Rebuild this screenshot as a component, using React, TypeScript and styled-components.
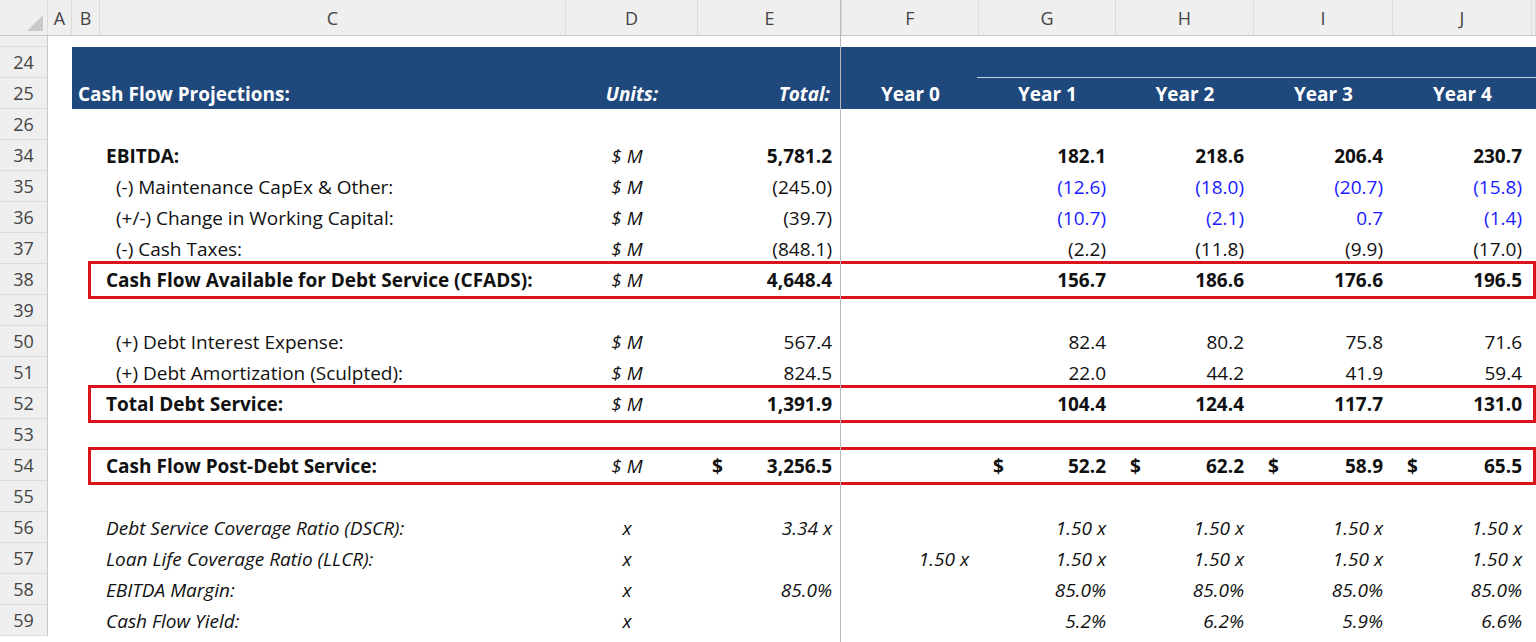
import React from 'react';
import styled, { createGlobalStyle } from 'styled-components';

const COLS = '48px 24px 28px 466px 132px 144px 137px 137px 138px 139px 139px 1fr';
const BLUE = '#1f487c';

const Global = createGlobalStyle`
  body { margin: 0; background: #fff; font-family: "Open Sans", "Liberation Sans", sans-serif; }
`;

const Sheet = styled.div`
  position: relative;
  width: 1536px;
  height: 642px;
  overflow: hidden;
  &::after {
    content: '';
    position: absolute;
    left: 840px;
    top: 0;
    bottom: 0;
    width: 1px;
    background: #b8b8b8;
  }
`;

const HeaderRow = styled.div`
  display: grid;
  grid-template-columns: ${COLS};
  height: 35px;
  background: #efefef;
  border-bottom: 1px solid #c8c8c8;
  color: #444;
  font-size: 18px;
  > div {
    display: flex;
    align-items: center;
    justify-content: center;
    border-right: 1px solid #dcdcdc;
  }
`;

const Corner = styled.div`
  position: relative;
  &::before {
    content: '';
    position: absolute;
    right: 4px;
    bottom: 4px;
    border-left: 16px solid transparent;
    border-bottom: 16px solid #c9c9c9;
  }
`;

const Row = styled.div<{ $h?: number; $band?: boolean; $bold?: boolean; $italic?: boolean }>`
  position: relative;
  display: grid;
  grid-template-columns: ${COLS};
  height: ${(p) => p.$h ?? 31}px;
  font-size: 19px;
  color: #111;
  font-weight: ${(p) => (p.$bold ? 700 : 400)};
  font-style: ${(p) => (p.$italic ? 'italic' : 'normal')};
  > div {
    display: flex;
    align-items: center;
    white-space: nowrap;
  }
`;

const Num = styled.div`
  justify-content: center;
  background: #efefef;
  color: #444;
  font-size: 18px;
  font-weight: 400;
  font-style: normal;
  border-bottom: 1px solid #dcdcdc;
  border-right: 1px solid #c8c8c8;
`;

const Band = styled.div<{ $line?: boolean }>`
  grid-column: 3 / -1;
  background: ${BLUE};
  position: relative;
  ${(p) =>
    p.$line &&
    `&::after{content:'';position:absolute;left:905px;right:0;bottom:0;height:1px;background:#c8d4e6;}`}
`;

const Head = styled.div<{ $align?: string }>`
  background: ${BLUE};
  color: #fff;
  font-weight: 700;
  justify-content: ${(p) => p.$align ?? 'center'};
  padding: 0 6px;
`;

const Label = styled.div<{ $indent?: number }>`
  grid-column: 4;
  padding-left: ${(p) => p.$indent ?? 6}px;
`;

const Unit = styled.div`
  justify-content: center;
  font-style: italic;
  font-weight: 400;
  padding-right: 10px;
`;

const Val = styled.div<{ $blue?: boolean; $bold?: boolean }>`
  justify-content: space-between;
  padding: 0 10px 0 14px;
  color: ${(p) => (p.$blue ? '#1a1aff' : 'inherit')};
  span:last-child { margin-left: auto; }
`;

const Box = styled.span`
  position: absolute;
  left: 88px;
  width: 1442px;
  top: -3px;
  bottom: -4px;
  border: 3px solid #d9141b;
  pointer-events: none;
`;

type Line = {
  n: string;
  label?: string;
  indent?: number;
  unit?: string;
  total?: string;
  f?: string;
  years?: string[];
  blue?: boolean;
  dollar?: boolean;
  bold?: boolean;
  italic?: boolean;
  box?: boolean;
};

const LINES: Line[] = [
  { n: '26' },
  { n: '34', label: 'EBITDA:', unit: '$ M', total: '5,781.2', years: ['182.1', '218.6', '206.4', '230.7'], bold: true },
  { n: '35', label: '(-) Maintenance CapEx & Other:', indent: 16, unit: '$ M', total: '(245.0)', years: ['(12.6)', '(18.0)', '(20.7)', '(15.8)'], blue: true },
  { n: '36', label: '(+/-) Change in Working Capital:', indent: 16, unit: '$ M', total: '(39.7)', years: ['(10.7)', '(2.1)', '0.7', '(1.4)'], blue: true },
  { n: '37', label: '(-) Cash Taxes:', indent: 16, unit: '$ M', total: '(848.1)', years: ['(2.2)', '(11.8)', '(9.9)', '(17.0)'] },
  { n: '38', label: 'Cash Flow Available for Debt Service (CFADS):', unit: '$ M', total: '4,648.4', years: ['156.7', '186.6', '176.6', '196.5'], bold: true, box: true },
  { n: '39' },
  { n: '50', label: '(+) Debt Interest Expense:', indent: 16, unit: '$ M', total: '567.4', years: ['82.4', '80.2', '75.8', '71.6'] },
  { n: '51', label: '(+) Debt Amortization (Sculpted):', indent: 16, unit: '$ M', total: '824.5', years: ['22.0', '44.2', '41.9', '59.4'] },
  { n: '52', label: 'Total Debt Service:', unit: '$ M', total: '1,391.9', years: ['104.4', '124.4', '117.7', '131.0'], bold: true, box: true },
  { n: '53' },
  { n: '54', label: 'Cash Flow Post-Debt Service:', unit: '$ M', total: '3,256.5', years: ['52.2', '62.2', '58.9', '65.5'], bold: true, box: true, dollar: true },
  { n: '55' },
  { n: '56', label: 'Debt Service Coverage Ratio (DSCR):', unit: 'x', total: '3.34 x', years: ['1.50 x', '1.50 x', '1.50 x', '1.50 x'], italic: true },
  { n: '57', label: 'Loan Life Coverage Ratio (LLCR):', unit: 'x', f: '1.50 x', years: ['1.50 x', '1.50 x', '1.50 x', '1.50 x'], italic: true },
  { n: '58', label: 'EBITDA Margin:', unit: 'x', total: '85.0%', years: ['85.0%', '85.0%', '85.0%', '85.0%'], italic: true },
  { n: '59', label: 'Cash Flow Yield:', unit: 'x', years: ['5.2%', '6.2%', '5.9%', '6.6%'], italic: true },
];

const money = (v?: string, dollar?: boolean) => (
  <>
    {dollar && <span>$</span>}
    <span>{v}</span>
  </>
);

export default function App() {
  return (
    <Sheet>
      <Global />
      <HeaderRow>
        <Corner />
        {['A', 'B', 'C', 'D', 'E', 'F', 'G', 'H', 'I', 'J', ''].map((c, i) => (
          <div key={i}>{c}</div>
        ))}
      </HeaderRow>
      <Row $h={11}>
        <Num />
      </Row>
      <Row>
        <Num>24</Num>
        <Band $line />
      </Row>
      <Row $bold>
        <Num>25</Num>
        <Head style={{ gridColumn: '3 / 5' }} $align="flex-start">
          Cash Flow Projections:
        </Head>
        <Head style={{ fontStyle: 'italic' }}>Units:</Head>
        <Head $align="flex-end" style={{ fontStyle: 'italic', paddingRight: 12 }}>
          Total:
        </Head>
        {['Year 0', 'Year 1', 'Year 2', 'Year 3', 'Year 4'].map((y) => (
          <Head key={y}>{y}</Head>
        ))}
        <Head />
      </Row>
      {LINES.map((l) => (
        <Row key={l.n} $bold={l.bold} $italic={l.italic}>
          <Num>{l.n}</Num>
          {l.label && (
            <>
              <Label $indent={l.indent}>{l.label}</Label>
              <Unit>{l.unit}</Unit>
              <Val>{money(l.total, l.dollar)}</Val>
              <Val>{money(l.f)}</Val>
              {l.years!.map((y, i) => (
                <Val key={i} $blue={l.blue}>
                  {money(y, l.dollar)}
                </Val>
              ))}
            </>
          )}
          {l.box && <Box />}
        </Row>
      ))}
    </Sheet>
  );
}
